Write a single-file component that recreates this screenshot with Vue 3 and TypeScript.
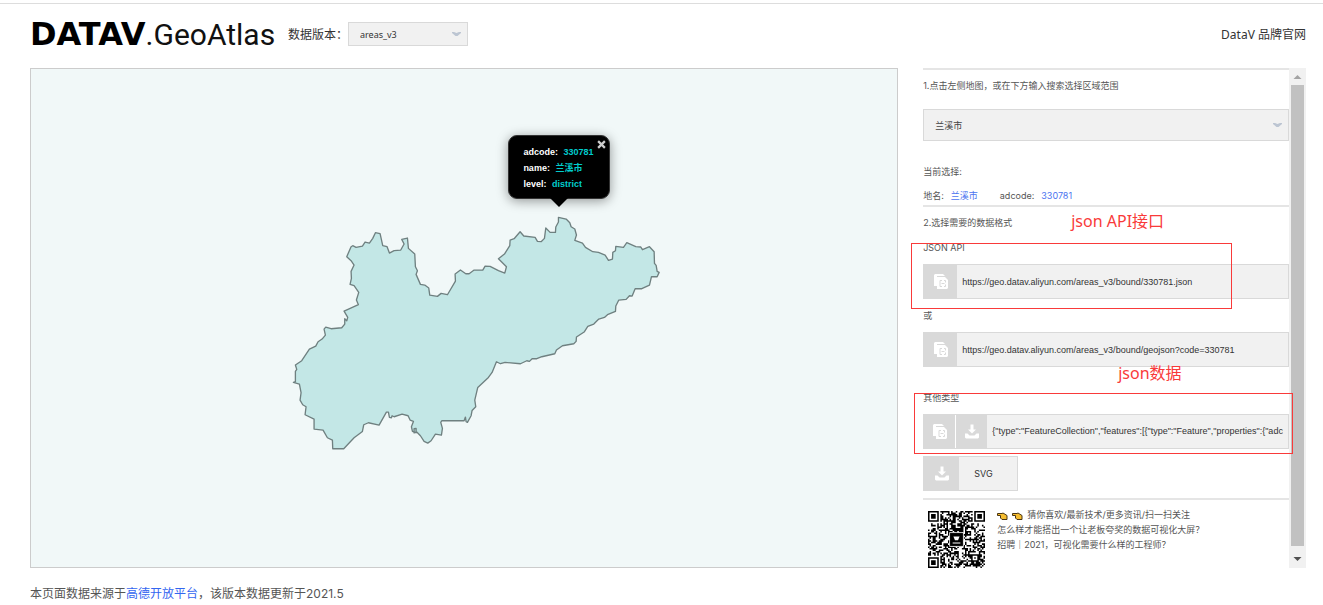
<script setup lang="ts">
import { computed, ref } from 'vue'

const version = ref('areas_v3')
const region = ref('兰溪市')
const adcode = ref('330781')

const base = computed(() => `https://geo.datav.aliyun.com/${version.value}/bound/`)
const jsonUrl = computed(() => `${base.value}${adcode.value}.json`)
const queryUrl = computed(() => `${base.value}geojson?code=${adcode.value}`)
const geojson =
  '{"type":"FeatureCollection","features":[{"type":"Feature","properties":{"adcode":330781,"name":"兰溪市"}}]}'

const copyBack = 'M1 0h8l2 2H3v10H0V1z'
const copyFront = 'M3 3h8l3 3v8l-1 1H3z'
const copyCut = 'M6 6.500h2M10 6.500h1.500v2M6 6.500v6h2M10 12.500h1.500v-2M7.500 9.500h3'
const download = 'M5.500 0h3v5H11L7 9 3 5h2.500zM0 9h2.500l2 2h5l2-2H14v4l-1 1H1l-1-1z'

const outline =
  'M40 517L46 515 46 484 50 478 46 465 65 452 88 417 107 408 114 395 126 387 136 375 132 357 137 351 153 356 185 353 194 342 194 326 200 332 203 322 192 303 235 284 229 270 236 247 222 227 210 223 214 205 213 184 222 165 213 152 200 140 213 110 218 107 228 112 247 108 255 96 268 99 278 85 286 68 300 71 308 107 321 110 328 129 342 122 362 120 372 102 365 88 382 84 385 115 404 132 406 170 412 182 408 193 421 223 434 225 446 234 449 255 472 259 483 250 502 254 526 213 525 192 541 180 557 191 567 191 582 180 608 180 615 168 630 169 655 182 674 189 679 170 655 146 673 132 689 107 690 90 702 86 720 65 731 78 765 82 772 94 783 95 793 85 797 54 810 67 826 67 827 51 835 36 835 22 858 27 869 38 873 50 884 57 889 75 884 91 907 99 916 112 938 125 955 127 975 135 985 151 997 147 998 127 1006 122 1007 109 1030 112 1040 98 1067 110 1082 111 1087 119 1108 110 1122 125 1123 160 1128 166 1131 184 1137 187 1131 200 1114 200 1108 225 1085 236 1065 236 1056 258 1048 257 1038 268 1016 270 1007 288 1006 304 982 314 973 322 956 327 941 342 923 349 912 366 889 381 888 394 881 401 847 407 829 420 824 431 785 440 770 446 756 446 748 454 740 452 721 461 675 457 661 461 649 455 636 487 625 502 593 532 584 570 587 590 576 601 573 617 562 637 558 635 556 621 552 632 485 632 482 637 487 655 484 675 466 672 453 692 443 699 432 694 421 677 410 666 402 668 402 656 408 655 408 668 397 664 394 650 400 634 390 630 384 617 366 612 342 620 336 617 334 623 328 622 325 606 319 606 297 645 265 638 251 644 247 664 222 683 191 716 158 716 157 690 142 683 129 660 102 657 102 627 75 614 78 590 68 584 60 570 63 548 58 522Z'

const SIZE = 37

function finder(x: number, y: number): boolean | null {
  for (const [cx, cy] of [[3, 3], [SIZE - 4, 3], [3, SIZE - 4]]) {
    const d = Math.max(Math.abs(x - cx), Math.abs(y - cy))
    if (d <= 4) return d === 3 || d <= 1
  }
  const a = Math.max(Math.abs(x - 30), Math.abs(y - 30))
  if (a <= 2) return a !== 1
  return null
}

// Path of the dark modules of the code
const qrPath = (() => {
  let seed = 330781
  let d = ''
  for (let y = 0; y < SIZE; y++) {
    for (let x = 0; x < SIZE; x++) {
      seed = (seed * 1103515245 + 12345) % 2147483648
      const fixed = finder(x, y)
      if (fixed ?? (seed >> 12) % 100 < 52) d += `M${x} ${y}h1v1h-1z`
    }
  }
  return d
})()
</script>

<template>
  <div class="page">
    <header class="header">
      <h1 class="logo"><b>DATAV</b><span>.GeoAtlas</span></h1>
      <label class="version-label" for="version">数据版本：</label>
      <div class="picker version">
        <select id="version" v-model="version">
          <option>areas_v3</option>
          <option>areas_v2</option>
        </select>
        <svg class="caret" viewBox="0 0 9 6" aria-hidden="true"><path d="M0 1h2l2.500 1L7 1h2v1L5.500 5h-2L0 2z" /></svg>
      </div>
      <a class="brand" href="#brand">DataV 品牌官网</a>
    </header>

    <main class="main">
      <section class="map">
        <svg class="shape" viewBox="-747 -423 2598 1494" role="img" aria-label="兰溪市">
          <path :d="outline" />
        </svg>
        <div class="popup">
          <button class="close" type="button" aria-label="Close">
            <svg viewBox="0 0 8 8"><path d="M1 1l6 6M7 1L1 7" /></svg>
          </button>
          <p>adcode: <em>{{ adcode }}</em></p>
          <p>name: <em>{{ region }}</em></p>
          <p>level: <em>district</em></p>
        </div>
      </section>

      <aside class="side">
        <div class="content">
          <section class="block">
            <label class="line" for="region">1.点击左侧地图，或在下方输入搜索选择区域范围</label>
            <div class="picker region">
              <select id="region" v-model="region">
                <option>兰溪市</option>
              </select>
              <svg class="caret" viewBox="0 0 9 6" aria-hidden="true"><path d="M0 1h2l2.500 1L7 1h2v1L5.500 5h-2L0 2z" /></svg>
            </div>
            <p class="line current">当前选择:</p>
            <p class="line selected">
              <span>地名:</span><em>{{ region }}</em><span class="code">adcode:</span><em>{{ adcode }}</em>
            </p>
          </section>

          <section class="block">
            <p class="line">2.选择需要的数据格式</p>
            <label class="line api" for="json-url">JSON API</label>
            <div class="field">
              <button type="button" aria-label="Copy">
                <svg viewBox="0 0 14 15"><path class="solid" :d="copyBack" /><path class="solid" :d="copyFront" /><path class="cut" :d="copyCut" /></svg>
              </button>
              <input id="json-url" :value="jsonUrl" readonly />
            </div>
            <label class="line or" for="query-url">或</label>
            <div class="field">
              <button type="button" aria-label="Copy">
                <svg viewBox="0 0 14 15"><path class="solid" :d="copyBack" /><path class="solid" :d="copyFront" /><path class="cut" :d="copyCut" /></svg>
              </button>
              <input id="query-url" :value="queryUrl" readonly />
            </div>
            <label class="line other" for="geojson">其他类型</label>
            <div class="field">
              <button class="narrow" type="button" aria-label="Copy">
                <svg viewBox="0 0 14 15"><path class="solid" :d="copyBack" /><path class="solid" :d="copyFront" /><path class="cut" :d="copyCut" /></svg>
              </button>
              <button class="narrow second" type="button" aria-label="Download">
                <svg viewBox="0 0 14 14"><path class="solid" :d="download" /></svg>
              </button>
              <input id="geojson" :value="geojson" readonly />
            </div>
            <button class="svg-button" type="button">
              <i><svg viewBox="0 0 14 14"><path class="solid" :d="download" /></svg></i>
              <span>SVG</span>
            </button>
          </section>

          <section class="block news">
            <svg class="qr" viewBox="0 0 37 37" role="img" aria-label="QR">
              <path :d="qrPath" />
              <path class="plate" d="M14 14h9v9h-9z" />
              <path class="mark" d="M16.500 16.500h4l-1 2.500h-2zM16 20.500h5v.6h-5z" />
            </svg>
            <div class="links">
              <a href="#follow">
                <svg v-for="n in 2" :key="n" class="hand" viewBox="0 0 11 8" aria-hidden="true"><path d="M.500 1.500h4.500l1-.5 4 2.500v4H5L3.500 6V3.500H.500z" /></svg>猜你喜欢/最新技术/更多资讯/扫一扫关注</a>
              <a href="#screen">怎么样才能搭出一个让老板夸奖的数据可视化大屏？</a>
              <a href="#jobs">招聘｜2021，可视化需要什么样的工程师？</a>
            </div>
          </section>
        </div>

        <div class="scrollbar" aria-hidden="true">
          <svg viewBox="0 0 17 17"><path class="up" d="M4.500 11h8l-4-4z" /></svg>
          <div class="thumb"></div>
          <svg viewBox="0 0 17 17"><path class="down" d="M4.500 6h8l-4 4z" /></svg>
        </div>

        <div class="frame frame-api"></div>
        <div class="note note-api">json API接口</div>
        <div class="frame frame-data"></div>
        <div class="note note-data">json数据</div>
      </aside>
    </main>

    <footer class="footer">本页面数据来源于<a href="#amap">高德开放平台</a>，该版本数据更新于2021.5</footer>
  </div>
</template>

<style>
body {
  margin: 0;
  background: #fff;
}
</style>

<style scoped>
.page {
  margin-top: 3px;
  border-top: 1px solid #ddd;
  padding: 0 17px 0 30px;
  color: #333;
  font-family: "Noto Sans", "Noto Sans CJK SC", sans-serif;
  font-size: 12px;
}
.page *,
.page {
  box-sizing: border-box;
}
p,
h1 {
  margin: 0;
}
a {
  color: inherit;
  text-decoration: none;
}
em {
  font-style: normal;
}
button {
  border: 0;
  padding: 0;
  background: none;
  cursor: pointer;
}

.header {
  display: flex;
  align-items: center;
  height: 64px;
  padding-bottom: 4px;
}
.logo {
  display: flex;
  align-items: baseline;
  width: 258px;
  color: #111;
  font-size: 30px;
  font-weight: 400;
  line-height: 40px;
  white-space: nowrap;
}
.logo b {
  color: #000;
  font-family: "DejaVu Sans", sans-serif;
  font-size: 32px;
  font-weight: 700;
}
.logo span {
  font-family: Roboto, sans-serif;
}
.brand {
  margin-left: auto;
}

.picker {
  position: relative;
}
.picker select {
  display: block;
  width: 100%;
  height: 32px;
  border: 1px solid #d9d9d9;
  border-radius: 0;
  padding: 0 24px 0 11px;
  background: #f1f1f1;
  color: #444;
  font-family: inherit;
  font-size: 9px;
  appearance: none;
}
.version {
  width: 120px;
}
.picker.version select {
  height: 24px;
  color: #333;
}
.caret {
  position: absolute;
  top: 50%;
  right: 7px;
  width: 9px;
  height: 6px;
  margin-top: -3px;
  fill: #bcc5d2;
  pointer-events: none;
}

.main {
  display: flex;
  justify-content: space-between;
  gap: 25px;
}
.map {
  position: relative;
  flex: 1;
  min-width: 0;
  border: 1px solid #ccc;
  background: #f1f8f8;
}
.shape {
  display: block;
  width: 100%;
  height: 100%;
}
.shape path {
  fill: #c3e7e6;
  stroke: #6f8080;
  stroke-width: 4;
  stroke-linejoin: round;
}
.popup {
  position: absolute;
  left: 61%;
  bottom: 74%;
  width: 102px;
  padding: 8px 0 6px 14px;
  border: 1px solid #333;
  border-radius: 9px;
  background: #000;
  box-shadow: 0 2px 12px rgba(0, 0, 0, 0.4);
  color: #fff;
  font: bold 9px/16px "Liberation Sans", "Noto Sans CJK SC", sans-serif;
  white-space: nowrap;
  transform: translateX(-50%);
}
.popup::after {
  content: "";
  position: absolute;
  top: 100%;
  left: 50%;
  margin-left: -9px;
  border: 9px solid transparent;
  border-top-color: #000;
  border-bottom: 0;
}
.popup em {
  margin-left: 3px;
  color: #0cc;
}
.close {
  position: absolute;
  top: 4px;
  right: 3px;
  width: 9px;
  height: 9px;
}
.close svg {
  display: block;
  width: 9px;
  height: 9px;
  fill: none;
  stroke: #ccc;
  stroke-width: 2;
}

.side {
  position: relative;
  display: flex;
  width: 30%;
  min-height: 500px;
  color: #555;
  font-family: Inter, "Noto Sans CJK SC", sans-serif;
  font-size: 9px;
  line-height: 15px;
}
.content {
  flex: 1;
  min-width: 0;
}
.block {
  padding-top: 8px;
  border-top: 2px solid #e5e5e5;
}
.line {
  display: block;
}
.region {
  margin-top: 16px;
}
.current {
  margin-top: 23px;
}
.selected {
  margin: 9px 0 2px;
}
.selected em {
  margin-left: 7px;
  color: #4c74f0;
}
.code {
  margin-left: 22px;
}
.api {
  margin-top: 10px;
}
.or {
  margin-top: 9px;
}
.other {
  margin-top: 23px;
}
.field {
  display: flex;
  height: 35px;
  margin-top: 9px;
  border: 1px solid #d9d9d9;
  background: #f1f1f1;
}
.field button {
  flex: none;
  width: 33px;
  background: #d9d9d9;
}
.field button.narrow {
  width: 31px;
}
.field .second {
  box-sizing: content-box;
  border-left: 1px solid #fff;
}
.field svg,
.svg-button svg {
  display: block;
  width: 14px;
  height: 15px;
  margin: 0 auto;
}
.solid {
  fill: #fff;
}
.cut {
  fill: none;
  stroke: #d9d9d9;
  stroke-width: 1;
}
.field input {
  flex: 1;
  min-width: 0;
  margin: 0 5px;
  border: 0;
  padding: 0;
  outline: 0;
  background: none;
  color: #333;
  font: 9px "Liberation Sans", sans-serif;
}
.svg-button {
  display: flex;
  height: 35px;
  margin: 7px 0;
  border: 1px solid #d9d9d9;
  background: #f1f1f1;
  color: #333;
  font: 9px Inter, sans-serif;
}
.svg-button i {
  display: flex;
  align-items: center;
  width: 35px;
  height: 33px;
  background: #d9d9d9;
}
.svg-button span {
  padding: 0 24px 0 15px;
  line-height: 33px;
}

.news {
  display: flex;
  padding-top: 7px;
}
.qr {
  flex: none;
  width: 57px;
  height: 57px;
  margin: 4px 12px 0 5px;
}
.plate {
  stroke: #fff;
  stroke-width: 0.5;
}
.mark {
  fill: #fff;
}
.links a {
  display: block;
}
.hand {
  width: 11px;
  height: 8px;
  margin: 0 4px 0 0;
  fill: #f5bd30;
  stroke: #4a3512;
  stroke-width: 1;
  vertical-align: -2px;
}

.scrollbar {
  display: flex;
  flex-direction: column;
  flex: none;
  width: 17px;
  background: #f1f1f1;
}
.scrollbar svg {
  display: block;
  height: 17px;
}
.thumb {
  flex: 1;
  margin: 0 2px 5px;
  background: #c1c1c1;
}
.up {
  fill: #a3a3a3;
}
.down {
  fill: #505050;
}

/* Red call-outs lie over the panel */
.frame {
  position: absolute;
  border: 1px solid #f93a3a;
  pointer-events: none;
}
.frame-api {
  top: 175px;
  left: -12px;
  right: 74px;
  height: 66px;
}
.frame-data {
  top: 325px;
  left: -9px;
  right: 13px;
  height: 61px;
}
.note {
  position: absolute;
  color: #f93a3a;
  font: 16px/20px "Noto Sans", "Noto Sans CJK SC", sans-serif;
  white-space: nowrap;
  pointer-events: none;
}
.note-api {
  top: 143px;
  left: 148px;
}
.note-data {
  top: 295px;
  left: 195px;
}

.footer {
  padding: 16px 0 0;
  color: #555;
  font-family: Inter, "Noto Sans CJK SC", sans-serif;
  line-height: 20px;
}
.footer a {
  color: #3366f0;
}
</style>
